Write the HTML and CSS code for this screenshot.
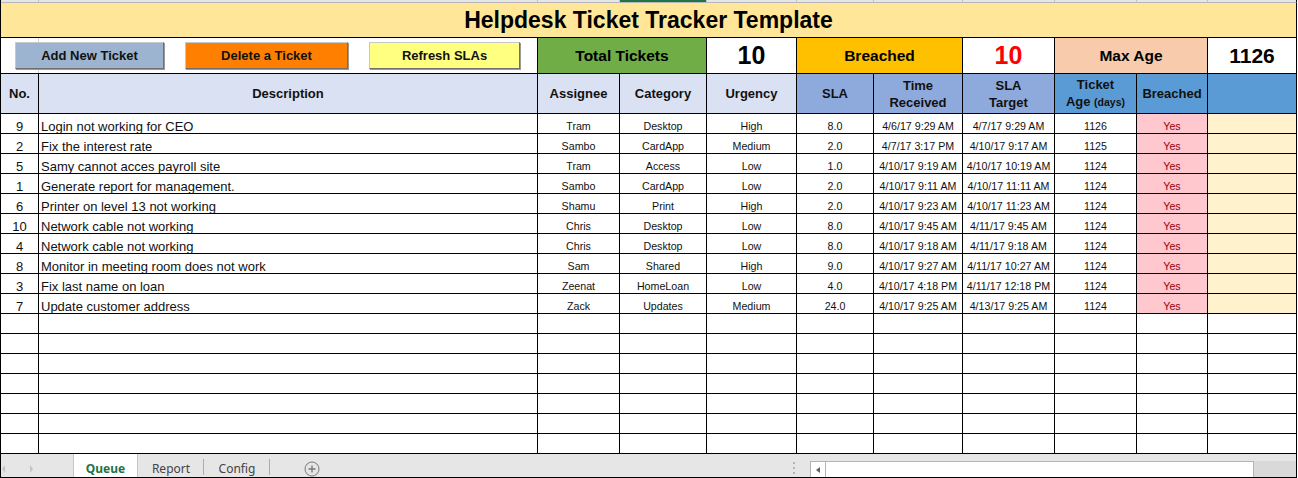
FILE: index.html
```html
<!DOCTYPE html>
<html lang="en">
<head>
    <meta charset="UTF-8">
    <meta name="viewport" content="width=device-width, initial-scale=1.0">
    <title>Helpdesk Ticket Tracker Template</title>
    <link rel="stylesheet" href="styles.css">
</head>
<body>
    <div class="sheet">
        <table class="grid">
            <colgroup>
                <col class="c-no">
                <col class="c-desc">
                <col class="c-assignee">
                <col class="c-category">
                <col class="c-urgency">
                <col class="c-sla">
                <col class="c-received">
                <col class="c-target">
                <col class="c-age">
                <col class="c-breached">
                <col class="c-extra">
            </colgroup>
            <tr class="strip">
                <td></td><td></td><td></td><td class="sel"></td><td></td><td></td>
                <td></td><td></td><td></td><td></td><td></td>
            </tr>
            <tr class="title-row">
                <td colspan="11" class="title">Helpdesk Ticket Tracker Template</td>
            </tr>
            <tr class="summary">
                <td colspan="2" class="actions">
                    <div class="buttons">
                        <button class="btn btn-add">Add New Ticket</button>
                        <button class="btn btn-delete">Delete a Ticket</button>
                        <button class="btn btn-refresh">Refresh SLAs</button>
                    </div>
                </td>
                <td colspan="2" class="label total">Total Tickets</td>
                <td class="value">10</td>
                <td colspan="2" class="label breached">Breached</td>
                <td class="value alert">10</td>
                <td colspan="2" class="label max-age">Max Age</td>
                <td class="value small">1126</td>
            </tr>
            <tr class="head">
                <td>No.</td>
                <td>Description</td>
                <td>Assignee</td>
                <td>Category</td>
                <td>Urgency</td>
                <td class="mid">SLA</td>
                <td class="mid">Time<br>Received</td>
                <td class="mid">SLA<br>Target</td>
                <td class="dark">Ticket<br>Age <span class="unit">(days)</span></td>
                <td class="dark">Breached</td>
                <td class="dark"></td>
            </tr>
            <tr class="row">
                <td class="num">9</td><td class="desc">Login not working for CEO</td><td>Tram</td><td>Desktop</td><td>High</td><td>8.0</td><td>4/6/17 9:29 AM</td><td>4/7/17 9:29 AM</td><td>1126</td><td class="yes">Yes</td><td class="note"></td>
            </tr>
            <tr class="row">
                <td class="num">2</td><td class="desc">Fix the interest rate</td><td>Sambo</td><td>CardApp</td><td>Medium</td><td>2.0</td><td>4/7/17 3:17 PM</td><td>4/10/17 9:17 AM</td><td>1125</td><td class="yes">Yes</td><td class="note"></td>
            </tr>
            <tr class="row">
                <td class="num">5</td><td class="desc">Samy cannot acces payroll site</td><td>Tram</td><td>Access</td><td>Low</td><td>1.0</td><td>4/10/17 9:19 AM</td><td>4/10/17 10:19 AM</td><td>1124</td><td class="yes">Yes</td><td class="note"></td>
            </tr>
            <tr class="row">
                <td class="num">1</td><td class="desc">Generate report for management.</td><td>Sambo</td><td>CardApp</td><td>Low</td><td>2.0</td><td>4/10/17 9:11 AM</td><td>4/10/17 11:11 AM</td><td>1124</td><td class="yes">Yes</td><td class="note"></td>
            </tr>
            <tr class="row">
                <td class="num">6</td><td class="desc">Printer on level 13 not working</td><td>Shamu</td><td>Print</td><td>High</td><td>2.0</td><td>4/10/17 9:23 AM</td><td>4/10/17 11:23 AM</td><td>1124</td><td class="yes">Yes</td><td class="note"></td>
            </tr>
            <tr class="row">
                <td class="num">10</td><td class="desc">Network cable not working</td><td>Chris</td><td>Desktop</td><td>Low</td><td>8.0</td><td>4/10/17 9:45 AM</td><td>4/11/17 9:45 AM</td><td>1124</td><td class="yes">Yes</td><td class="note"></td>
            </tr>
            <tr class="row">
                <td class="num">4</td><td class="desc">Network cable not working</td><td>Chris</td><td>Desktop</td><td>Low</td><td>8.0</td><td>4/10/17 9:18 AM</td><td>4/11/17 9:18 AM</td><td>1124</td><td class="yes">Yes</td><td class="note"></td>
            </tr>
            <tr class="row">
                <td class="num">8</td><td class="desc">Monitor in meeting room does not work</td><td>Sam</td><td>Shared</td><td>High</td><td>9.0</td><td>4/10/17 9:27 AM</td><td>4/11/17 10:27 AM</td><td>1124</td><td class="yes">Yes</td><td class="note"></td>
            </tr>
            <tr class="row">
                <td class="num">3</td><td class="desc">Fix last name on loan</td><td>Zeenat</td><td>HomeLoan</td><td>Low</td><td>4.0</td><td>4/10/17 4:18 PM</td><td>4/11/17 12:18 PM</td><td>1124</td><td class="yes">Yes</td><td class="note"></td>
            </tr>
            <tr class="row">
                <td class="num">7</td><td class="desc">Update customer address</td><td>Zack</td><td>Updates</td><td>Medium</td><td>24.0</td><td>4/10/17 9:25 AM</td><td>4/13/17 9:25 AM</td><td>1124</td><td class="yes">Yes</td><td class="note"></td>
            </tr>
            <tr class="row"><td></td><td></td><td></td><td></td><td></td><td></td><td></td><td></td><td></td><td></td><td></td></tr>
            <tr class="row"><td></td><td></td><td></td><td></td><td></td><td></td><td></td><td></td><td></td><td></td><td></td></tr>
            <tr class="row"><td></td><td></td><td></td><td></td><td></td><td></td><td></td><td></td><td></td><td></td><td></td></tr>
            <tr class="row"><td></td><td></td><td></td><td></td><td></td><td></td><td></td><td></td><td></td><td></td><td></td></tr>
            <tr class="row"><td></td><td></td><td></td><td></td><td></td><td></td><td></td><td></td><td></td><td></td><td></td></tr>
            <tr class="row"><td></td><td></td><td></td><td></td><td></td><td></td><td></td><td></td><td></td><td></td><td></td></tr>
            <tr class="row"><td></td><td></td><td></td><td></td><td></td><td></td><td></td><td></td><td></td><td></td><td></td></tr>
        </table>

        <div class="tabbar">
            <div class="sheets">
                <div class="nav">
                    <span class="arrow-left"></span>
                    <span class="arrow-right"></span>
                </div>
                <div class="tab active">Queue</div>
                <div class="tab">Report</div>
                <div class="tab">Config</div>
                <div class="add-sheet">
                    <svg width="16" height="16" viewBox="0 0 16 16">
                        <circle cx="8" cy="8" r="7" fill="none" stroke="#7a7a7a" stroke-width="1"/>
                        <path d="M8 4.5v7M4.5 8h7" stroke="#7a7a7a" stroke-width="1.4"/>
                    </svg>
                </div>
            </div>
            <div class="grip"><span></span><span></span><span></span></div>
            <div class="hscroll">
                <div class="hscroll-btn"><span class="arrow-dark"></span></div>
            </div>
            <div class="hscroll-end"></div>
        </div>
    </div>
</body>
</html>
```

FILE: styles.css
```css
* {
    margin: 0;
    padding: 0;
    box-sizing: border-box;
}

body {
    background: #fff;
    font-family: "Liberation Sans", Arial, sans-serif;
    color: #111;
}

.sheet {
    width: 1297px;
    border-left: 1px solid #000;
}

.grid {
    width: 1296px;
    table-layout: fixed;
    border-collapse: separate;
    border-spacing: 0;
}

.c-no { width: 38px; }
.c-desc { width: 499px; }
.c-assignee { width: 82px; }
.c-category { width: 87px; }
.c-urgency { width: 90px; }
.c-sla { width: 77px; }
.c-received { width: 89px; }
.c-target { width: 92px; }
.c-age { width: 82px; }
.c-breached { width: 71px; }
.c-extra { width: 89px; }

.grid td {
    border-right: 1px solid #000;
    border-bottom: 1px solid #000;
    padding: 0 2px;
    white-space: nowrap;
    overflow: hidden;
}

/* column header sliver at the very top */
.strip {
    height: 3px;
}

.strip td {
    background: #e6e6e6;
    border-right-color: #c3c3c3;
    border-bottom: 1px solid #b8b8b8;
    font-size: 0;
    line-height: 0;
}

.strip td:last-child {
    border-right-color: #000;
}

.strip td.sel {
    background: #217346;
}

.title-row {
    height: 35px;
}

.title {
    background: #ffe699;
    text-align: center;
    font-weight: bold;
    font-size: 23px;
    line-height: 26px;
    padding-top: 3px;
    color: #000;
}

/* summary row */
.summary {
    height: 36px;
}

.summary td {
    text-align: center;
    vertical-align: middle;
    font-weight: bold;
    color: #000;
}

.actions {
    background: linear-gradient(to right, transparent 37px, #d4d4d4 37px, #d4d4d4 38px, transparent 38px);
}

.grid td.actions {
    padding: 0 0 0 14px;
}

.buttons {
    display: flex;
    align-items: center;
    gap: 21px;
}

.btn {
    height: 27px;
    font-family: "Liberation Sans", Arial, sans-serif;
    font-size: 13px;
    font-weight: bold;
    color: #111;
    border: 1px solid;
    border-color: #c8c8c8 #6f6f6f #6f6f6f #c8c8c8;
    box-shadow: 1px 1px 0 #9a9a9a;
    cursor: pointer;
}

.btn-add {
    width: 149px;
    background: #9cb4d0;
}

.btn-delete {
    width: 163px;
    background: #ff8000;
}

.btn-refresh {
    width: 151px;
    background: #ffff80;
}

.label {
    font-size: 15.5px;
}

.total {
    background: #70ad47;
}

.breached {
    background: #ffc000;
}

.max-age {
    background: #f8cbad;
}

.value {
    background: #fff;
    font-size: 25px;
}

.value.alert {
    color: #ff0000;
}

.value.small {
    font-size: 21px;
}

/* column headings */
.head {
    height: 40px;
}

.head td {
    background: #d9e1f2;
    text-align: center;
    vertical-align: middle;
    font-weight: bold;
    font-size: 13px;
    line-height: 17px;
    white-space: normal;
}

.head td.mid {
    background: #8ea9db;
}

.head td.dark {
    background: #5b9bd5;
}

.unit {
    font-size: 10.5px;
}

/* ticket rows */
.row {
    height: 20px;
}

.row td {
    text-align: center;
    vertical-align: bottom;
    font-size: 10.67px;
    line-height: 13px;
}

.row td.num {
    font-size: 13px;
}

.row td.desc {
    text-align: left;
    font-size: 13px;
}

.row td.yes {
    background: #ffc7ce;
    color: #9c0006;
}

.row td.note {
    background: #fff2cc;
}

/* sheet tabs */
.tabbar {
    display: flex;
    width: 1296px;
    height: 24px;
    background: #e6e6e6;
    border-right: 1px solid #000;
    border-bottom: 1px solid #000;
    font-family: "Noto Sans", "Open Sans", sans-serif;
    font-size: 12px;
    color: #444;
}

.sheets {
    display: flex;
    flex: 0 0 786px;
}

.nav {
    display: flex;
    align-items: center;
    gap: 25px;
    width: 72px;
    padding: 6px 0 0 1px;
}

.arrow-left,
.arrow-right,
.arrow-dark {
    width: 0;
    height: 0;
    border-top: 4px solid transparent;
    border-bottom: 4px solid transparent;
}

.arrow-left {
    border-right: 3px solid #c4c4c4;
}

.arrow-right {
    border-left: 3px solid #c4c4c4;
}

.tab {
    position: relative;
    display: flex;
    align-items: center;
    justify-content: center;
    width: 66px;
    padding-top: 5px;
}

.tab::after {
    content: "";
    position: absolute;
    right: 0;
    top: 5px;
    bottom: 2px;
    width: 1px;
    background: #ababab;
}

.tab.active {
    width: 65px;
    background: #fff;
    border-left: 1px solid #c6c6c6;
    border-right: 1px solid #c6c6c6;
    color: #217346;
    font-weight: bold;
}

.tab.active::after {
    display: none;
}

.tab:last-of-type {
    width: 63px;
}

.add-sheet {
    display: flex;
    align-items: center;
    margin-left: 34px;
    padding-top: 7px;
}

.grip {
    display: flex;
    flex-direction: column;
    gap: 3px;
    flex: 0 0 23px;
    padding: 8px 0 0 6px;
}

.grip span {
    width: 2px;
    height: 2px;
    background: #b4b4b4;
}

.hscroll {
    flex: 0 0 444px;
    margin-top: 7px;
    background: #fff;
    border: 1px solid #b4b4b4;
    border-bottom: none;
}

.hscroll-btn {
    display: flex;
    align-items: center;
    justify-content: center;
    width: 15px;
    height: 100%;
    border-right: 1px solid #b4b4b4;
}

.arrow-dark {
    border-top-width: 3.5px;
    border-bottom-width: 3.5px;
    border-right: 4px solid #5f5f5f;
}

.hscroll-end {
    flex: 1;
    margin-top: 7px;
    background: #d9d9d9;
}
```
